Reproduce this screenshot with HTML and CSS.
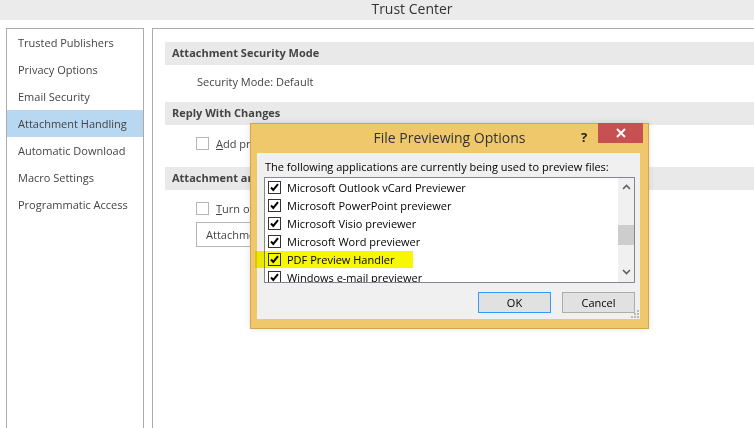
FILE: index.html
```html
<!DOCTYPE html>
<html>
<head>
<meta charset="utf-8">
<link rel="stylesheet" href="styles.css">
</head>
<body>
<div class="window">
  <div class="titlebar">Trust Center</div>
  <div class="panes">
    <div class="nav">
      <div class="nav-item">Trusted Publishers</div>
      <div class="nav-item">Privacy Options</div>
      <div class="nav-item">Email Security</div>
      <div class="nav-item selected">Attachment Handling</div>
      <div class="nav-item">Automatic Download</div>
      <div class="nav-item">Macro Settings</div>
      <div class="nav-item">Programmatic Access</div>
    </div>
    <div class="content">
      <div class="section-head">Attachment Security Mode</div>
      <div class="info">Security Mode: Default</div>
      <div class="section-head">Reply With Changes</div>
      <div class="opt">
        <span class="cb"></span>
        <span class="opt-label"><u>A</u>dd properties to attachments to enable Reply with Changes</span>
      </div>
      <div class="section-head">Attachment and Document Preview</div>
      <div class="opt2">
        <div class="opt-row">
          <span class="cb"></span>
          <span class="opt-label"><u>T</u>urn off Attachment Preview</span>
        </div>
        <div class="btn-prev">Attachment and Document Previewers...</div>
      </div>
    </div>
  </div>
</div>

<div class="dialog">
  <div class="dlg-title">File Previewing Options</div>
  <div class="dlg-help">?</div>
  <div class="dlg-close">
    <svg width="12" height="12" viewBox="0 0 12 12"><path d="M2 2 L10 10 M10 2 L2 10" stroke="#fff" stroke-width="2"/></svg>
  </div>
  <div class="dlg-body">
    <div class="desc">The following applications are currently being used to preview files:</div>
    <div class="list">
      <div class="row"><svg class="chk" viewBox="0 0 13 13"><rect x="0.5" y="0.5" width="12" height="12" fill="#fff" stroke="#333"/><path d="M3 6.5 L5.3 9 L10 3.2" fill="none" stroke="#000" stroke-width="2"/></svg><span>Microsoft Outlook vCard Previewer</span></div>
      <div class="row"><svg class="chk" viewBox="0 0 13 13"><rect x="0.5" y="0.5" width="12" height="12" fill="#fff" stroke="#333"/><path d="M3 6.5 L5.3 9 L10 3.2" fill="none" stroke="#000" stroke-width="2"/></svg><span>Microsoft PowerPoint previewer</span></div>
      <div class="row"><svg class="chk" viewBox="0 0 13 13"><rect x="0.5" y="0.5" width="12" height="12" fill="#fff" stroke="#333"/><path d="M3 6.5 L5.3 9 L10 3.2" fill="none" stroke="#000" stroke-width="2"/></svg><span>Microsoft Visio previewer</span></div>
      <div class="row"><svg class="chk" viewBox="0 0 13 13"><rect x="0.5" y="0.5" width="12" height="12" fill="#fff" stroke="#333"/><path d="M3 6.5 L5.3 9 L10 3.2" fill="none" stroke="#000" stroke-width="2"/></svg><span>Microsoft Word previewer</span></div>
      <div class="row"><svg class="chk" viewBox="0 0 13 13"><rect x="0.5" y="0.5" width="12" height="12" fill="#fff" stroke="#333"/><path d="M3 6.5 L5.3 9 L10 3.2" fill="none" stroke="#000" stroke-width="2"/></svg><span>PDF Preview Handler</span></div>
      <div class="row"><svg class="chk" viewBox="0 0 13 13"><rect x="0.5" y="0.5" width="12" height="12" fill="#fff" stroke="#333"/><path d="M3 6.5 L5.3 9 L10 3.2" fill="none" stroke="#000" stroke-width="2"/></svg><span>Windows e-mail previewer</span></div>
      <div class="scrollbar">
        <svg class="arrow-up" width="9" height="6" viewBox="0 0 9 6"><path d="M1 5 L4.5 1.5 L8 5" fill="none" stroke="#606060" stroke-width="1.6"/></svg>
        <div class="thumb"></div>
        <svg class="arrow-down" width="9" height="6" viewBox="0 0 9 6"><path d="M1 1 L4.5 4.5 L8 1" fill="none" stroke="#606060" stroke-width="1.6"/></svg>
      </div>
    </div>
    <div class="buttons">
      <div class="btn ok">OK</div>
      <div class="btn">Cancel</div>
    </div>
  </div>
  <svg class="grip" width="9" height="9" viewBox="0 0 9 9">
    <rect x="6" y="0" width="2" height="2" fill="#b8b8b8"/>
    <rect x="3" y="3" width="2" height="2" fill="#b8b8b8"/>
    <rect x="6" y="3" width="2" height="2" fill="#b8b8b8"/>
    <rect x="0" y="6" width="2" height="2" fill="#b8b8b8"/>
    <rect x="3" y="6" width="2" height="2" fill="#b8b8b8"/>
    <rect x="6" y="6" width="2" height="2" fill="#b8b8b8"/>
  </svg>
</div>

<div class="highlight"></div>
</body>
</html>
```

FILE: styles.css
```css
* { box-sizing: border-box; }

html, body {
  margin: 0;
  padding: 0;
}

body {
  width: 754px;
  height: 428px;
  overflow: hidden;
  background: #fff;
  font-family: "Open Sans", "Noto Sans", sans-serif;
  font-size: 11px;
  color: #444;
  position: relative;
}

.window {
  display: flex;
  flex-direction: column;
  height: 428px;
}

.titlebar {
  height: 20px;
  line-height: 18px;
  background: #ebebeb;
  text-align: center;
  font-size: 14px;
  color: #333;
  padding-left: 70px;
  flex: none;
}

.panes {
  flex: 1;
  display: flex;
  margin-top: 8px;
  gap: 8px;
}

.nav {
  margin-left: 6px;
  width: 138px;
  border: 1px solid #ababab;
  border-bottom: none;
  flex: none;
}

.nav-item {
  height: 27px;
  line-height: 27px;
  padding-left: 11px;
  white-space: nowrap;
}

.nav-item.selected {
  background: #b8d7f1;
}

.content {
  flex: 1;
  border: 1px solid #ababab;
  border-bottom: none;
  border-right: none;
  padding-top: 13px;
  padding-left: 12px;
  margin-right: -20px;
}

.section-head {
  height: 23px;
  line-height: 21px;
  background: #e9e9e9;
  padding-left: 7px;
  font-weight: 700;
  white-space: nowrap;
}

.info {
  height: 37px;
  line-height: 34px;
  padding-left: 32px;
}

.opt {
  height: 42px;
  padding-top: 12px;
  padding-left: 31px;
  display: flex;
  align-items: flex-start;
  white-space: nowrap;
}

.opt .cb, .opt-row .cb {
  width: 13px;
  height: 13px;
  border: 1px solid #b5b5b5;
  background: #fff;
  flex: none;
}

.opt-label {
  margin-left: 7px;
  line-height: 13px;
}

.opt2 {
  padding-top: 12px;
  padding-left: 31px;
}

.opt-row {
  display: flex;
  align-items: center;
  height: 13px;
  white-space: nowrap;
}

.btn-prev {
  margin-top: 7px;
  height: 25px;
  width: 300px;
  border: 1px solid #b5b5b5;
  line-height: 23px;
  padding-left: 9px;
  white-space: nowrap;
}

/* dialog */
.dialog {
  position: absolute;
  left: 250px;
  top: 123px;
  width: 399px;
  height: 206px;
  background: #efc86b;
  border: 1px solid #d2a54c;
  padding: 29px 8px 9px 6px;
  box-shadow: 0 0 6px rgba(0,0,0,0.12);
}

.dlg-title {
  position: absolute;
  left: 0;
  right: 0;
  top: 5px;
  text-align: center;
  font-size: 14px;
  line-height: 18px;
  color: #333;
}

.dlg-help {
  position: absolute;
  left: 330px;
  top: 4px;
  font-size: 13px;
  font-weight: 700;
  color: #222;
  line-height: 18px;
}

.dlg-close {
  position: absolute;
  left: 347px;
  top: -1px;
  width: 45px;
  height: 20px;
  background: #c75050;
  display: flex;
  align-items: center;
  justify-content: center;
}

.dlg-body {
  background: #f0f0f0;
  height: 166px;
  display: flex;
  flex-direction: column;
  color: #000;
}

.desc {
  height: 24px;
  padding-top: 7px;
  line-height: 14px;
  padding-left: 8px;
  white-space: nowrap;
  flex: none;
}

.list {
  position: relative;
  margin-left: 7px;
  width: 371px;
  height: 106px;
  border: 1px solid #828790;
  background: #fff;
  overflow: hidden;
  flex: none;
}

.row {
  height: 18px;
  display: flex;
  align-items: center;
  padding-left: 3px;
  white-space: nowrap;
}

.chk {
  width: 13px;
  height: 13px;
  margin-right: 6px;
  flex: none;
}

.scrollbar {
  position: absolute;
  right: 0;
  top: 0;
  bottom: 0;
  width: 16px;
  background: #f0f0f0;
}

.arrow-up {
  position: absolute;
  left: 4px;
  top: 6px;
}

.arrow-down {
  position: absolute;
  left: 4px;
  bottom: 7px;
}

.thumb {
  position: absolute;
  left: 0;
  right: 0;
  top: 47px;
  height: 20px;
  background: #cdcdcd;
}

.buttons {
  display: flex;
  justify-content: flex-end;
  gap: 11px;
  padding-right: 5px;
  margin-top: 9px;
}

.btn {
  width: 73px;
  height: 21px;
  border: 1px solid #adadad;
  background: #e1e1e1;
  text-align: center;
  line-height: 19px;
  color: #000;
}

.btn.ok {
  border-color: #3399ff;
}

.grip {
  position: absolute;
  right: 8px;
  bottom: 9px;
}

.highlight {
  position: absolute;
  left: 255px;
  top: 251px;
  width: 158px;
  height: 17px;
  background: #f7f700;
  mix-blend-mode: multiply;
}
```
